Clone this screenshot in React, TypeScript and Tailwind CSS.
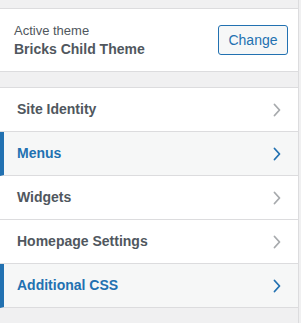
import { ChevronRight } from "lucide-react";

const items = [
  { label: "Site Identity", active: false },
  { label: "Menus", active: true },
  { label: "Widgets", active: false },
  { label: "Homepage Settings", active: false },
  { label: "Additional CSS", active: true },
];

function Chevron({ active }: { active: boolean }) {
  return (
    <svg width="10" height="14" viewBox="0 0 10 14" fill="none" className="shrink-0">
      <path
        d="M2.5 1.5 L7.5 7 L2.5 12.5"
        stroke={active ? "#2271b1" : "#a7aaad"}
        strokeWidth="1.8"
        strokeLinecap="round"
        strokeLinejoin="round"
      />
    </svg>
  );
}

export default function App() {
  return (
    <div
      className="w-[301px] h-[323px] bg-[#f0f0f1] flex overflow-hidden"
      style={{ fontFamily: '"Liberation Sans", Arial, sans-serif' }}
    >
      <div className="w-[299px] border-r border-[#dcdcde] flex flex-col pt-2">
        <div className="h-[64px] bg-white border-y border-[#dcdcde] flex items-center justify-between pl-[14px] pr-[10px]">
          <div className="flex flex-col">
            <span className="text-[13px] leading-[17px] text-[#50575e]">Active theme</span>
            <span className="text-[14px] leading-[20px] font-bold text-[#50575e]">Bricks Child Theme</span>
          </div>
          <button className="h-[30px] w-[70px] rounded-[3px] border border-[#2271b1] bg-[#f6f7f7] text-[#2271b1] text-[14px] leading-none">
            Change
          </button>
        </div>
        <div className="mt-[15px] flex flex-col border-t border-[#dcdcde]">
          {items.map((it) => (
            <div
              key={it.label}
              className={
                it.active
                  ? "h-[44px] flex items-center justify-between pl-[13px] pr-[16px] border-b border-[#dcdcde] border-l-[4px] border-l-[#2271b1] bg-[#f6f7f7]"
                  : "h-[44px] flex items-center justify-between pl-[17px] pr-[16px] border-b border-[#dcdcde] bg-white"
              }
            >
              <span
                className={
                  it.active
                    ? "text-[14px] font-bold text-[#2271b1]"
                    : "text-[14px] font-bold text-[#50575e]"
                }
              >
                {it.label}
              </span>
              <Chevron active={it.active} />
            </div>
          ))}
        </div>
      </div>
    </div>
  );
}
